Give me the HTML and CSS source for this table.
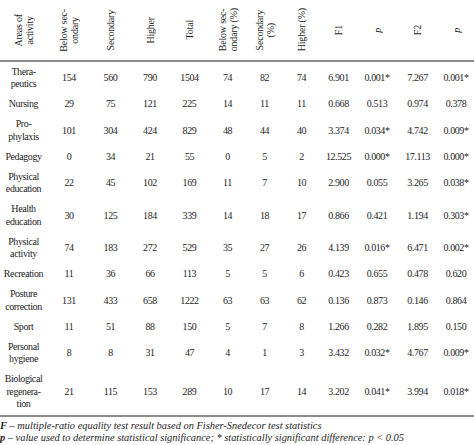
FILE: index.html
```html
<!DOCTYPE html>
<html>
<head>
<meta charset="utf-8">
<link rel="stylesheet" href="styles.css">
</head>
<body>
<table class="stats">
  <colgroup>
    <col class="c1"><col class="c2"><col class="c3"><col class="c4"><col class="c5"><col class="c6">
    <col class="c7"><col class="c8"><col class="c9"><col class="c10"><col class="c11"><col class="c12">
  </colgroup>
  <thead>
    <tr>
      <th><div class="rot">Areas of<br>activity</div></th>
      <th><div class="rot">Below sec-<br>ondary</div></th>
      <th><div class="rot">Secondary</div></th>
      <th><div class="rot">Higher</div></th>
      <th><div class="rot">Total</div></th>
      <th><div class="rot">Below sec-<br>ondary (%)</div></th>
      <th><div class="rot">Secondary<br>(%)</div></th>
      <th><div class="rot">Higher (%)</div></th>
      <th><div class="rot">F1</div></th>
      <th><div class="rot"><i>p</i></div></th>
      <th><div class="rot">F2</div></th>
      <th><div class="rot"><i>p</i></div></th>
    </tr>
  </thead>
  <tbody>
    <tr><td>Thera-<br>peutics</td><td>154</td><td>560</td><td>790</td><td>1504</td><td>74</td><td>82</td><td>74</td><td>6.901</td><td>0.001*</td><td>7.267</td><td>0.001*</td></tr>
    <tr><td>Nursing</td><td>29</td><td>75</td><td>121</td><td>225</td><td>14</td><td>11</td><td>11</td><td>0.668</td><td>0.513</td><td>0.974</td><td>0.378</td></tr>
    <tr><td>Pro-<br>phylaxis</td><td>101</td><td>304</td><td>424</td><td>829</td><td>48</td><td>44</td><td>40</td><td>3.374</td><td>0.034*</td><td>4.742</td><td>0.009*</td></tr>
    <tr><td>Pedagogy</td><td>0</td><td>34</td><td>21</td><td>55</td><td>0</td><td>5</td><td>2</td><td>12.525</td><td>0.000*</td><td>17.113</td><td>0.000*</td></tr>
    <tr><td>Physical<br>education</td><td>22</td><td>45</td><td>102</td><td>169</td><td>11</td><td>7</td><td>10</td><td>2.900</td><td>0.055</td><td>3.265</td><td>0.038*</td></tr>
    <tr><td>Health<br>education</td><td>30</td><td>125</td><td>184</td><td>339</td><td>14</td><td>18</td><td>17</td><td>0.866</td><td>0.421</td><td>1.194</td><td>0.303*</td></tr>
    <tr><td>Physical<br>activity</td><td>74</td><td>183</td><td>272</td><td>529</td><td>35</td><td>27</td><td>26</td><td>4.139</td><td>0.016*</td><td>6.471</td><td>0.002*</td></tr>
    <tr><td>Recreation</td><td>11</td><td>36</td><td>66</td><td>113</td><td>5</td><td>5</td><td>6</td><td>0.423</td><td>0.655</td><td>0.478</td><td>0.620</td></tr>
    <tr><td>Posture<br>correction</td><td>131</td><td>433</td><td>658</td><td>1222</td><td>63</td><td>63</td><td>62</td><td>0.136</td><td>0.873</td><td>0.146</td><td>0.864</td></tr>
    <tr><td>Sport</td><td>11</td><td>51</td><td>88</td><td>150</td><td>5</td><td>7</td><td>8</td><td>1.266</td><td>0.282</td><td>1.895</td><td>0.150</td></tr>
    <tr><td>Personal<br>hygiene</td><td>8</td><td>8</td><td>31</td><td>47</td><td>4</td><td>1</td><td>3</td><td>3.432</td><td>0.032*</td><td>4.767</td><td>0.009*</td></tr>
    <tr><td>Biological<br>regenera-<br>tion</td><td>21</td><td>115</td><td>153</td><td>289</td><td>10</td><td>17</td><td>14</td><td>3.202</td><td>0.041*</td><td>3.994</td><td>0.018*</td></tr>
  </tbody>
</table>
<div class="notes">
  <p><b>F</b> – multiple-ratio equality test result based on Fisher-Snedecor test statistics</p>
  <p><b>p</b> – value used to determine statistical significance; * statistically significant difference: p &lt; 0.05</p>
</div>
</body>
</html>
```
FILE: styles.css
```css
html, body {
  margin: 0;
  padding: 0;
  background: #ffffff;
}
body {
  font-family: "Liberation Serif", "DejaVu Serif", serif;
  color: #1e1e1e;
  width: 474px;
  overflow: hidden;
}
.stats {
  width: 474px;
  border-collapse: collapse;
  table-layout: fixed;
  font-size: 10px;
  letter-spacing: -0.4px;
}
.c1 { width: 47px; }
.c2 { width: 44px; }
.c3 { width: 39px; }
.c4 { width: 40px; }
.c5 { width: 39px; }
.c6 { width: 37px; }
.c7 { width: 37px; }
.c8 { width: 37px; }
.c9 { width: 37px; }
.c10 { width: 40px; }
.c11 { width: 41px; }
.c12 { width: 36px; }
.stats thead th {
  height: 60px;
  padding: 0;
  font-weight: normal;
  vertical-align: middle;
  border-bottom: 2px solid #8c8c8c;
}
.rot {
  writing-mode: vertical-rl;
  transform: rotate(180deg);
  margin: 0 auto;
  text-align: center;
  line-height: 11px;
  letter-spacing: -0.2px;
}
.stats tbody td {
  padding: 3.75px 0;
  line-height: 12.5px;
  text-align: center;
  vertical-align: middle;
  white-space: nowrap;
}
.stats tbody tr:last-child td {
  border-bottom: 2px solid #8c8c8c;
}
.notes {
  margin-top: 3px;
  font-style: italic;
  font-size: 10.4px;
  line-height: 12px;
}
.notes p {
  margin: 0;
}
```
